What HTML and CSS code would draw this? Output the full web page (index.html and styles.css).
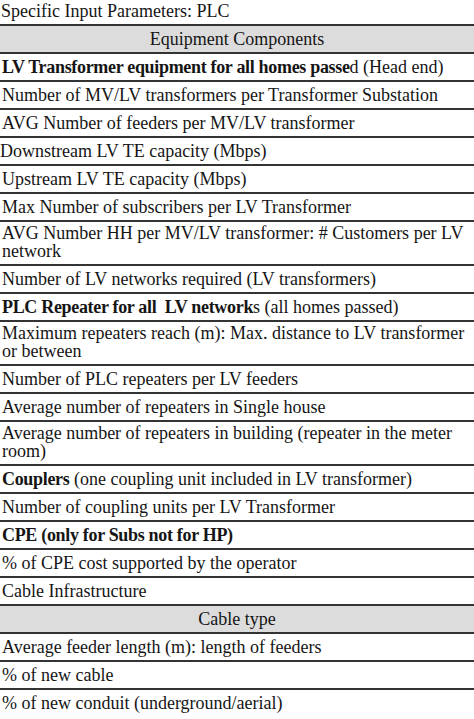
FILE: index.html
```html
<!DOCTYPE html>
<html>
<head>
<meta charset="utf-8">
<title>Specific Input Parameters: PLC</title>
<link rel="stylesheet" href="styles.css">
</head>
<body>
<div class="sheet">
  <div class="title">Specific Input Parameters: PLC</div>
  <div class="row head">Equipment Components</div>
  <div class="row"><b>LV Transformer equipment for all homes passe</b>d (Head end)</div>
  <div class="row">Number of MV/LV transformers per Transformer Substation</div>
  <div class="row">AVG Number of feeders per MV/LV transformer</div>
  <div class="row flush">Downstream LV TE capacity (Mbps)</div>
  <div class="row">Upstream LV TE capacity (Mbps)</div>
  <div class="row">Max Number of subscribers per LV Transformer</div>
  <div class="row two">AVG Number HH per MV/LV transformer: # Customers per LV network</div>
  <div class="row">Number of LV networks required (LV transformers)</div>
  <div class="row"><b>PLC Repeater for all&nbsp; LV network</b>s (all homes passed)</div>
  <div class="row two">Maximum repeaters reach (m): Max. distance to LV transformer or between</div>
  <div class="row">Number of PLC repeaters per LV feeders</div>
  <div class="row">Average number of repeaters in Single house</div>
  <div class="row two">Average number of repeaters in building (repeater in the meter room)</div>
  <div class="row"><b>Couplers</b> (one coupling unit included in LV transformer)</div>
  <div class="row">Number of coupling units per LV Transformer</div>
  <div class="row"><b>CPE (only for Subs not for HP)</b></div>
  <div class="row">% of CPE cost supported by the operator</div>
  <div class="row">Cable Infrastructure</div>
  <div class="row head">Cable type</div>
  <div class="row">Average feeder length (m): length of feeders</div>
  <div class="row">% of new cable</div>
  <div class="row">% of new conduit (underground/aerial)</div>
</div>
</body>
</html>
```
FILE: styles.css
```css
html, body {
  margin: 0;
  padding: 0;
  background: #ffffff;
}
.sheet {
  width: 474px;
  font-family: "Liberation Serif", "Times New Roman", serif;
  font-size: 18px;
  color: #151515;
  overflow: hidden;
}
.title {
  line-height: 22px;
  padding: 0 0 2px 1px;
}
.row {
  border-top: 2px solid #333333;
  line-height: 18px;
  padding: 4px 0 4px 2px;
}
.row.two {
  padding: 2px 0 4px 2px;
}
.row.flush {
  padding-left: 0;
}
.row.head {
  background: #dcdcdc;
  text-align: center;
  padding-left: 0;
}
.row b {
  font-weight: bold;
  letter-spacing: -0.32px;
}
```
